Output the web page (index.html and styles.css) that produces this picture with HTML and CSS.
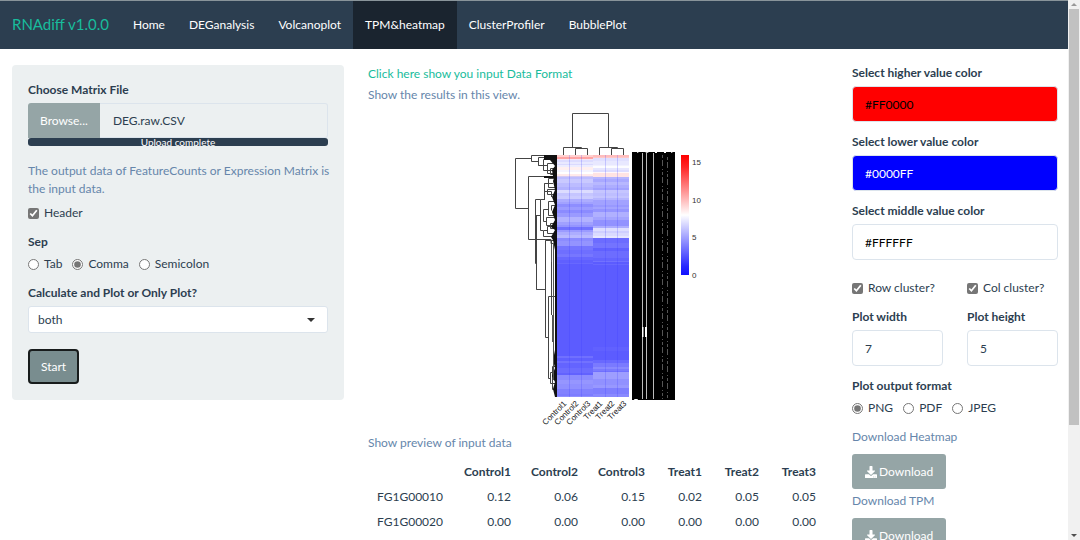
FILE: index.html
```
<!DOCTYPE html>
<html lang="en">
<head>
<meta charset="utf-8">
<title>RNAdiff v1.0.0</title>
<link rel="stylesheet" href="styles.css">
</head>
<body>
<div class="window">
  <div class="page">
    <nav class="navbar">
      <a class="brand" href="#">RNAdiff v1.0.0</a>
      <a class="tab" href="#">Home</a>
      <a class="tab" href="#">DEGanalysis</a>
      <a class="tab" href="#">Volcanoplot</a>
      <a class="tab active" href="#">TPM&amp;heatmap</a>
      <a class="tab" href="#">ClusterProfiler</a>
      <a class="tab" href="#">BubblePlot</a>
    </nav>
    <main class="columns">
      <form class="panel">
        <label class="title" for="matrix-name">Choose Matrix File</label>
        <div class="file">
          <label class="browse">Browse...<input class="file-input" type="file"></label>
          <input class="file-name" id="matrix-name" type="text" value="DEG.raw.CSV" readonly>
        </div>
        <div class="progress">Upload complete</div>
        <p class="help panel-help">The output data of FeatureCounts or Expression Matrix is the input data.</p>
        <div class="options group-end"><label class="option"><input type="checkbox" checked>Header</label></div>
        <fieldset class="group-end">
          <legend class="title">Sep</legend>
          <div class="options">
            <label class="option"><input type="radio" name="sep">Tab</label>
            <label class="option"><input type="radio" name="sep" checked>Comma</label>
            <label class="option"><input type="radio" name="sep">Semicolon</label>
          </div>
        </fieldset>
        <label class="title" for="mode">Calculate and Plot or Only Plot?</label>
        <div class="select-wrap">
          <select id="mode" class="select"><option>both</option><option>only plot</option></select>
        </div>
        <button class="start" type="button">Start</button>
      </form>

      <section class="results">
        <a class="format-link" href="#">Click here show you input Data Format</a>
        <p class="help">Show the results in this view.</p>
        <svg class="heatmap" viewBox="488 108 220 320" width="220" height="320" role="img" aria-label="Clustered heatmap">
          <defs>
            <linearGradient id="scale" x1="0" y1="0" x2="0" y2="1">
              <stop offset="0" stop-color="#f00"/><stop offset=".1" stop-color="#ff2525"/><stop offset=".5" stop-color="#fff"/><stop offset=".93" stop-color="#2626ff"/><stop offset="1" stop-color="#1010ff"/>
            </linearGradient>
          </defs>
          <g id="bands" shape-rendering="crispEdges"></g>
          <path class="seam" d="M569.5 155V397M581.5 155V397M605.5 155V397M617.5 155V397"/>
          <path class="tree" d="M572.5 147V113.500H608.500V147M563.500 155V147.500H581.500V148.500M575.500 155V148.500H587.500V155M599.500 155V147.500H617.500V148.500M611.500 155V148.500H623.500V155"/>
          <path class="tree" d="M531 158.500H515.500V208.500H528.500M545 176.500H528.500V239.500H536M553 155.500H531.500V161.500H538M553 157.500H538.500V165.500H544M553 159.500H543.500V170.500H553M547 165.500H538.500M553 163.500H547.500V173.500H553M556 168.500H550.500V174.500H556M544.500 199.500H540.500V230.500H543M544.500 183.500V191.500H548M555 178.500H548.500V187.500H555M553 183.500H544.500V191.500H551.500V197M555 189.500H547.500V194.500H555M544.500 191.500V200M540.500 199.500H535.500V263.500H537M540.500 215.500H536M548 209.500H543.500V221.500H547M555 201.500H548.500V215.500H555M555 205.500H551.500V210.500M555 217.500H546.500V225.500H555M555 223.500H550.500V228.500H555M547 230.500H543.500V236.500H553M555 226.500H547.500V233.500H555M536.500 239.500H551V243.500H555M536.500 215V289.500H545M555 240.500H545.500V337.500H548M555 296.500H548.500V378.500H550M545.500 240.500H551.500V315M555 372.500H550.500V383.500H555M555 366.500H552.500V389.500H556M536.500 263.500V289.500"/>
          <path class="dense" d="M544 155H557V397H555L553 389L555 382L552 376L555 368L553 360L555 350V250L553 240L551 237L555 230L551 227L555 220L552 212L555 205L552 197L555 190L553 181L554 178H544V176H553L552 170L555 166L550 160H544Z"/>
          <path class="strands" d="M551.500 244V262M553.500 243V380M552.500 315V342"/>
          <rect x="632" y="153" width="43" height="246"/>
          <path d="M632 153V152H637V153L639 152H645L647 153L649 152H655V153H657V152H664V153H666V152H671V153L673 152H675V154H632ZM632 399V400H634L636 396L638 400H675V398Z"/>
          <path class="label-gap" d="M642.500 153V399M646.500 153V399M653.500 153V399"/>
          <path class="label-specks" d="M662.500 155V399M667.500 157V399"/>
          <rect x="642" y="327" width="1.500" height="10" fill="#fff"/><rect x="645" y="327" width="2" height="10" fill="#fff"/>
          <rect x="681" y="155" width="8" height="120" fill="url(#scale)"/>
          <g class="ticks"><text x="692" y="165">15</text><text x="692" y="203">10</text><text x="692" y="240">5</text><text x="692" y="278">0</text></g>
          <g class="samples">
            <text transform="translate(567 404) rotate(-45)">Control1</text>
            <text transform="translate(579 404) rotate(-45)">Control2</text>
            <text transform="translate(591 404) rotate(-45)">Control3</text>
            <text transform="translate(603 404) rotate(-45)">Treat1</text>
            <text transform="translate(615 404) rotate(-45)">Treat2</text>
            <text transform="translate(627 404) rotate(-45)">Treat3</text>
          </g>
        </svg>
        <p class="help">Show preview of input data</p>
        <table class="preview">
          <colgroup><col class="gene"><col class="control" span="3"><col class="treat" span="3"></colgroup>
          <thead><tr><th></th><th>Control1</th><th>Control2</th><th>Control3</th><th>Treat1</th><th>Treat2</th><th>Treat3</th></tr></thead>
          <tbody>
            <tr><td>FG1G00010</td><td>0.12</td><td>0.06</td><td>0.15</td><td>0.02</td><td>0.05</td><td>0.05</td></tr>
            <tr><td>FG1G00020</td><td>0.00</td><td>0.00</td><td>0.00</td><td>0.00</td><td>0.00</td><td>0.00</td></tr>
          </tbody>
        </table>
      </section>

      <form class="settings">
        <label class="title" for="high">Select higher value color</label>
        <input class="field group-end high" id="high" type="text" value="#FF0000">
        <label class="title" for="low">Select lower value color</label>
        <input class="field group-end low" id="low" type="text" value="#0000FF">
        <label class="title" for="mid">Select middle value color</label>
        <input class="field mid" id="mid" type="text" value="#FFFFFF">
        <div class="pair clusters">
          <label class="option"><input type="checkbox" checked>Row cluster?</label>
          <label class="option"><input type="checkbox" checked>Col cluster?</label>
        </div>
        <div class="pair group-end">
          <div><label class="title" for="pw">Plot width</label><input class="field" id="pw" type="text" inputmode="numeric" value="7"></div>
          <div><label class="title" for="ph">Plot height</label><input class="field" id="ph" type="text" inputmode="numeric" value="5"></div>
        </div>
        <fieldset class="group-end">
          <legend class="title">Plot output format</legend>
          <div class="options">
            <label class="option"><input type="radio" name="format" checked>PNG</label>
            <label class="option"><input type="radio" name="format">PDF</label>
            <label class="option"><input type="radio" name="format">JPEG</label>
          </div>
        </fieldset>
        <p class="help">Download Heatmap</p>
        <button class="download" type="button"><svg class="icon" viewBox="0 0 512 512" aria-hidden="true"><path fill="currentColor" d="M216 0h80c13 0 24 11 24 24v168h88c18 0 27 22 14 34L270 378c-7 8-20 8-28 0L90 226c-13-12-4-34 14-34h88V24c0-13 11-24 24-24zm296 376v112c0 13-11 24-24 24H24c-13 0-24-11-24-24V376c0-13 11-24 24-24h147l49 49c20 20 52 20 72 0l49-49h147c13 0 24 11 24 24zM388 464a20 20 0 1 0-40 0 20 20 0 0 0 40 0zm64 0a20 20 0 1 0-40 0 20 20 0 0 0 40 0z"/></svg>Download</button>
        <p class="help">Download TPM</p>
        <button class="download" type="button"><svg class="icon" viewBox="0 0 512 512" aria-hidden="true"><path fill="currentColor" d="M216 0h80c13 0 24 11 24 24v168h88c18 0 27 22 14 34L270 378c-7 8-20 8-28 0L90 226c-13-12-4-34 14-34h88V24c0-13 11-24 24-24zm296 376v112c0 13-11 24-24 24H24c-13 0-24-11-24-24V376c0-13 11-24 24-24h147l49 49c20 20 52 20 72 0l49-49h147c13 0 24 11 24 24zM388 464a20 20 0 1 0-40 0 20 20 0 0 0 40 0zm64 0a20 20 0 1 0-40 0 20 20 0 0 0 40 0z"/></svg>Download</button>
      </form>
    </main>
  </div>
  <div class="scrollbar" aria-hidden="true">
    <svg class="arrow" viewBox="0 0 12 9"><path d="M3 6L6 3L9 6Z" fill="#999"/></svg>
    <div class="thumb"></div>
    <svg class="arrow" viewBox="0 0 12 9"><path d="M3 3L6 6L9 3Z" fill="#505050"/></svg>
  </div>
</div>
<script src="heatmap.js"></script>
</body>
</html>
```
FILE: styles.css
```
* { box-sizing: border-box; }
body {
  margin: 0;
  font-family: Lato, "Liberation Sans", sans-serif;
  font-size: 12px;
  line-height: 18px;
  color: #2c3e50;
  background: #fff;
}
input, select, button { font: inherit; color: inherit; margin: 0; }
p { margin: 0; }
a { text-decoration: none; }
fieldset { border: 0; padding: 0; margin: 0; min-width: 0; }
legend { padding: 0; }

.window { display: flex; height: 100vh; overflow: hidden; }
.page { flex: 1; min-width: 0; }
.navbar {
  display: flex;
  height: 49px;
  background: #2c3e50;
  border-top: 1px solid #89949a;
}
.brand { padding: 14px 12px; font-size: 15px; color: #18bc9c; }
.tab { padding: 15px 12px; color: #fff; }
.active { background: #1a242f; }

.columns {
  display: grid;
  grid-template-columns: 332fr 460fr 206fr;
  gap: 24px;
  align-items: start;
  padding: 15px 10px 0 12px;
}
.title { display: block; margin-bottom: 4px; font-weight: 700; }
.help { color: #6686ab; }
.group-end { margin-bottom: 11px; }

.panel { margin-top: 1px; padding: 16px; background: #ecf0f1; border-radius: 4px; }
.panel .title { margin-bottom: 4px; }
.file { display: flex; height: 35px; }
.browse {
  padding: 9px 12px;
  color: #fff;
  background: #95a5a6;
  border-radius: 3px 0 0 0;
}
.file-input { display: none; }
.file-name {
  flex: 1;
  min-width: 0;
  padding: 0 13px;
  background: #ecf0f1;
  border: 1px solid #dce4ec;
  border-left: 0;
  border-radius: 0 3px 3px 0;
}
.progress {
  height: 8px;
  overflow: hidden;
  font-size: 10px;
  line-height: 8px;
  text-align: center;
  color: #fff;
  background: #2c3e50;
  border-radius: 3px;
}
.panel-help { margin: 16px -8px 6px 0; }
.options { display: flex; gap: 10px; }
.option { display: flex; align-items: center; gap: 5px; }
.option input { width: 11px; height: 11px; accent-color: #767676; }
.select-wrap { position: relative; }
.select-wrap::after {
  content: "";
  position: absolute;
  right: 13px;
  top: 12px;
  border: 4px solid transparent;
  border-top-color: #333;
  border-bottom: 0;
  pointer-events: none;
}
.select {
  display: block;
  width: 100%;
  height: 27px;
  padding: 0 9px;
  appearance: none;
  background: #fff;
  border: 1px solid #dce4ec;
  border-radius: 3px;
}
.start {
  display: block;
  height: 35px;
  margin-top: 16px;
  padding: 0 11px;
  color: #fff;
  background: #798d8f;
  border: 2px solid #181c1c;
  border-radius: 4px;
}

.results { padding-top: 1px; }
.format-link { display: block; margin-bottom: 3px; color: #18bc9c; }
.heatmap { display: block; margin: 4px auto 6px; }
.seam { stroke: #3c3cff; stroke-opacity: .22; fill: none; }
.tree { stroke: #444; stroke-width: 1; fill: none; }
.dense { fill: #111; }
.strands { stroke: #555; fill: none; }
.label-gap { stroke: #bbb; }
.label-specks { stroke: #555; stroke-dasharray: 3 2 6 3 1 2; }
.ticks, .samples { font-family: "Liberation Sans", Arial, sans-serif; font-size: 8px; fill: #333; }
.samples { text-anchor: end; fill: #111; }
.preview { margin-top: 7px; table-layout: fixed; width: 456px; border-collapse: collapse; }
.gene { width: 85px; }
.control { width: 67px; }
.treat { width: 57px; }
.preview th, .preview td { height: 25px; padding: 0 9px; text-align: right; }
.preview td:first-child { text-align: left; }

.field {
  display: block;
  width: 100%;
  height: 36px;
  padding: 0 12px;
  background: #fff;
  border: 1px solid #dce4ec;
  border-radius: 4px;
}
.high { color: #000; background: #f00; }
.low { color: #fff; background: #00f; }
.mid { color: #000; }
.pair { display: grid; grid-template-columns: 1fr 1fr; gap: 24px; }
.clusters { margin: 19px 0 11px; }
.clusters .option { white-space: nowrap; }
.download {
  display: flex;
  align-items: center;
  gap: 2px;
  height: 35px;
  margin: 8px 0 3px;
  padding: 0 13px;
  color: #fff;
  background: #95a5a6;
  border: 0;
  border-radius: 3px;
}
.icon { width: 12px; height: 12px; }

.scrollbar { display: flex; flex-direction: column; width: 12px; background: #f1f1f1; }
.arrow { width: 12px; height: 9px; }
.thumb { height: 77%; margin: 0 1px auto; background: #c1c1c1; }
```
FILE: heatmap.js
```
// Each band is [top, colour]; it runs down to the top of the next one.
const control = [
  [155, "#ffd0d0"], [157, "#ffa5a5"], [159, "#f3e4f4"], [160, "#dcdcff"], [162, "#e9e9ff"],
  [164, "#dadaff"], [165, "#ededff"], [167, "#fff0f0"], [170, "#f4f4ff"], [172, "#fff"],
  [174, "#ffeaea"], [176, "#d5c9f2"], [177, "#bdbdff"], [179, "#c9c9ff"], [183, "#bcbcff"],
  [187, "#b2b2ff"], [190, "#dcdcff"], [193, "#c5c5ff"], [196, "#cbcbff"], [199, "#adadff"],
  [202, "#a2a2ff"], [204, "#8e8eff"], [207, "#9b9bff"], [210, "#8b8bff"], [213, "#9a9aff"],
  [217, "#b3b3ff"], [222, "#a1a1ff"], [225, "#9595ff"], [227, "#7272ff"], [230, "#9b9bff"],
  [232, "#adadff"], [235, "#b9b9ff"], [238, "#8c8cff"], [241, "#9494ff"], [246, "#7575ff"],
  [250, "#6f6fff"], [254, "#7777ff"], [257, "#6767ff"], [260, "#6060ff"], [263, "#6868ff"],
  [264, "#5c5cff"], [356, "#7070ff"], [358, "#6060ff"], [361, "#7272ff"], [363, "#6464ff"],
  [368, "#6c6cff"], [373, "#6262ff"], [375, "#8c8cff"], [380, "#9696ff"], [384, "#9090ff"],
  [389, "#8181ff"], [394, "#7c7cff"], [396, "#9090ff"]
];
const treat = [
  [155, "#ffbdbd"], [157, "#ffc8c8"], [158, "#e0e0ff"], [161, "#e8e8ff"], [165, "#f1f1ff"],
  [166, "#fcfcff"], [168, "#e6e6ff"], [170, "#dcdcff"], [172, "#fff7fa"], [173, "#ffe3e3"],
  [177, "#b5b5ff"], [179, "#a9a9ff"], [182, "#b8b8ff"], [185, "#adadff"], [188, "#a2a2ff"],
  [190, "#c5c5ff"], [193, "#bebeff"], [196, "#c4c4ff"], [198, "#b5b5ff"], [200, "#a2a2ff"],
  [205, "#9999ff"], [207, "#a4a4ff"], [209, "#9595ff"], [212, "#b0b0ff"], [217, "#a4a4ff"],
  [220, "#9292ff"], [226, "#adadff"], [228, "#dedeff"], [231, "#cfcfff"], [233, "#dadaff"],
  [236, "#e6e6ff"], [238, "#6c6cff"], [243, "#7474ff"], [248, "#6161ff"], [251, "#6d6dff"],
  [258, "#6464ff"], [261, "#7272ff"], [262, "#5c5cff"], [264, "#6868ff"], [265, "#5c5cff"],
  [347, "#6161ff"], [351, "#5c5cff"], [360, "#6969ff"], [363, "#7a7aff"], [367, "#8989ff"],
  [369, "#7a7aff"], [371, "#7070ff"], [372, "#9e9eff"], [379, "#9191ff"], [385, "#9898ff"],
  [388, "#7e7eff"], [394, "#8989ff"]
];
const bottom = 397;
const layer = document.getElementById("bands");

function drawBands(bands, left, right) {
  bands.forEach(([top, colour], i) => {
    const end = i + 1 < bands.length ? bands[i + 1][0] : bottom;
    const rect = document.createElementNS("http://www.w3.org/2000/svg", "rect");
    rect.setAttribute("x", left);
    rect.setAttribute("y", top);
    rect.setAttribute("width", right - left);
    rect.setAttribute("height", end - top);
    rect.setAttribute("fill", colour);
    layer.appendChild(rect);
  });
}

drawBands(control, 557, 593);
drawBands(treat, 593, 629);
```
